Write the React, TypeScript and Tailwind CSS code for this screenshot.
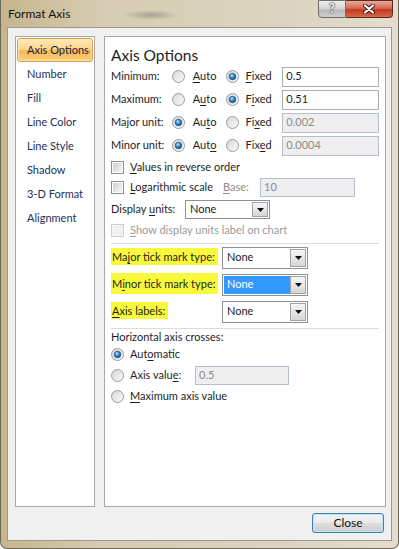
import type { ReactNode } from 'react';

const NAV = ['Axis Options', 'Number', 'Fill', 'Line Color', 'Line Style', 'Shadow', '3-D Format', 'Alignment'];

const UNIT_ROWS = [
  { label: 'Minimum:', auto: false, value: '0.5', key: 0 },
  { label: 'Maximum:', auto: false, value: '0.51', key: 1 },
  { label: 'Major unit:', auto: true, value: '0.002', key: 2 },
  { label: 'Minor unit:', auto: true, value: '0.0004', key: 3 },
];

// Underlines the accelerator letter, Windows style.
function Acc({ text, at }: { text: string; at: number }) {
  return (
    <span>
      {text.slice(0, at)}
      <span className="underline decoration-1 underline-offset-[2px]">{text[at]}</span>
      {text.slice(at + 1)}
    </span>
  );
}

function Radio({ checked }: { checked?: boolean }) {
  return (
    <svg width="13" height="13" viewBox="0 0 13 13" className="shrink-0">
      <circle cx="6.5" cy="6.5" r="6" fill="url(#rb-bg)" stroke="#9a9a9a" strokeWidth="1" />
      {checked && <circle cx="6.5" cy="6.5" r="3.3" fill="url(#rb-dot)" stroke="#1d4f80" strokeWidth="0.7" />}
    </svg>
  );
}

function Check({ disabled }: { disabled?: boolean }) {
  return (
    <span
      className={`flex h-[13px] w-[13px] shrink-0 items-center justify-center border ${
        disabled ? 'border-[#cfcfcf] bg-[#f7f7f7]' : 'border-[#8e8f8f] bg-white'
      }`}
    >
      <span
        className={`h-[9px] w-[9px] ${
          disabled ? 'bg-[#f1f1f1]' : 'bg-[linear-gradient(135deg,#cfcfcf,#f6f6f6)]'
        }`}
      />
    </span>
  );
}

function TextBox({ value, disabled, className = '' }: { value: string; disabled?: boolean; className?: string }) {
  return (
    <div
      className={`flex items-center border px-[3px] ${
        disabled ? 'border-[#b3bfcb] bg-[#efefef] text-[#8b8b8b]' : 'border-[#abadb3] bg-white text-[#1e1e1e]'
      } ${className}`}
    >
      {value}
    </div>
  );
}

function Select({ value, active, className = '' }: { value: string; active?: boolean; className?: string }) {
  return (
    <div className={`flex items-stretch border border-[#8d9096] bg-white p-px ${className}`}>
      <div className={`flex flex-1 items-center pl-[3px] ${active ? 'bg-[#3399ff] text-white' : ''}`}>{value}</div>
      <div className="flex w-[16px] items-center justify-center border border-[#a3a3a3] bg-[linear-gradient(#f7f7f7,#e6e6e6_50%,#d6d6d6)]">
        <svg width="7" height="4" viewBox="0 0 7 4">
          <path d="M0 0h7L3.5 4z" fill="#111" />
        </svg>
      </div>
    </div>
  );
}

function Row({ h, children }: { h: string; children: ReactNode }) {
  return <div className={`flex items-center ${h}`}>{children}</div>;
}

export default function App() {
  return (
    <div className="flex h-[549px] w-[399px] flex-col overflow-hidden whitespace-nowrap rounded-b-[7px] border-x border-b border-[#6b675c] bg-[linear-gradient(90deg,#c6b58c,#d6ccb2_25%,#dcd4c1_70%,#e4ddcd)] font-['Lato','Liberation_Sans',sans-serif] text-[11px] text-[#1e1e1e]">
      <svg width="0" height="0" className="absolute">
        <defs>
          <linearGradient id="rb-bg" x1="0" y1="0" x2="1" y2="1">
            <stop offset="0" stopColor="#d6d6d6" />
            <stop offset="1" stopColor="#fbfbfb" />
          </linearGradient>
          <radialGradient id="rb-dot" cx="0.4" cy="0.35" r="0.7">
            <stop offset="0" stopColor="#b8e8ff" />
            <stop offset="0.45" stopColor="#3f8fcf" />
            <stop offset="1" stopColor="#123f70" />
          </radialGradient>
        </defs>
      </svg>

      {/* title bar */}
      <div className="flex h-[27px] shrink-0 items-start justify-between bg-[radial-gradient(ellipse_28px_5px_at_150px_15px,rgba(80,80,70,0.35),transparent)]">
        <div className="flex h-[27px] items-center pl-[7px] text-[12px] text-[#111]">Format Axis</div>
        <div className="mr-[5px] flex">
          <div className="flex h-[18px] w-[28px] items-center justify-center rounded-bl-[4px] border border-[#6e6e6e] bg-[linear-gradient(#f0f0f0,#d4d4d4_50%,#b8b8b8_55%,#cfcfcf)] text-[13px] font-bold text-[#f4f4f4] [text-shadow:0_0_2px_#333,0_0_1px_#222]">
            ?
          </div>
          <div className="flex h-[18px] w-[47px] items-center justify-center rounded-br-[4px] border border-l-0 border-[#5b2a1f] bg-[linear-gradient(#e8a99a,#d46a53_45%,#c23a20_55%,#d9694d)]">
            <svg width="12" height="10" viewBox="0 0 12 10">
              <path d="M2 1.5l8 7M10 1.5l-8 7" stroke="#3a1a12" strokeWidth="4" strokeLinecap="round" />
              <path d="M2 1.5l8 7M10 1.5l-8 7" stroke="#fff" strokeWidth="2.2" strokeLinecap="round" />
            </svg>
          </div>
        </div>
      </div>

      {/* client area */}
      <div className="mx-[6px] flex h-[514px] shrink-0 flex-col border border-[#9c9788] bg-[#f0f0f0] pl-[7px] pt-[8px]">
        <div className="flex h-[471px] gap-[9px]">
          <div className="w-[80px] border border-[#a8a8a8] bg-white p-px">
            {NAV.map((item, i) =>
              i === 0 ? (
                <div
                  key={item}
                  className="flex h-[24px] w-[76px] items-center rounded-[3px] border border-[#dfa04a] bg-[linear-gradient(#fee9b9,#fcd68e_45%,#f8b652_55%,#fbd382)] pl-[9px] text-[#1b2240] shadow-[inset_0_0_0_1px_rgba(255,240,200,0.6)]"
                >
                  {item}
                </div>
              ) : (
                <div key={item} className="flex h-[24px] items-center pl-[10px] text-[#22305a]">
                  {item}
                </div>
              ),
            )}
          </div>

          <div className="flex w-[282px] flex-col border border-[#a8a8a8] bg-white pl-[6px] pr-[6px]">
            <div className="mt-[8px] h-[20px] text-[15.5px] leading-[20px]">Axis Options</div>

            {UNIT_ROWS.map((r) => (
              <Row key={r.label} h="h-[23px]">
                <span className="w-[61px]">{r.label}</span>
                <span className="flex w-[54px] items-center gap-[8px]">
                  <Radio checked={r.auto} />
                  <Acc text="Auto" at={r.key} />
                </span>
                <span className="flex w-[57px] items-center gap-[7px]">
                  <Radio checked={!r.auto} />
                  <Acc text="Fixed" at={r.key} />
                </span>
                <TextBox value={r.value} disabled={r.auto} className="h-[20px] w-[97px]" />
              </Row>
            ))}

            <Row h="h-[20px]">
              <Check />
              <span className="ml-[6px]">
                <Acc text="Values in reverse order" at={0} />
              </span>
            </Row>
            <Row h="h-[21px]">
              <span className="flex w-[112px] items-center gap-[6px]">
                <Check />
                <Acc text="Logarithmic scale" at={0} />
              </span>
              <span className="w-[37px] text-[#8d8d8d]">
                <Acc text="Base:" at={0} />
              </span>
              <TextBox value="10" disabled className="h-[19px] w-[95px]" />
            </Row>
            <Row h="h-[23px]">
              <span className="w-[74px]">
                <Acc text="Display units:" at={8} />
              </span>
              <Select value="None" className="h-[19px] w-[85px]" />
            </Row>
            <Row h="h-[19px]">
              <Check disabled />
              <span className="ml-[6px] text-[#9a9a9a]">
                <Acc text="Show display units label on chart" at={0} />
              </span>
            </Row>

            <div className="mt-[3px] h-px bg-[#dcdcdc]" />

            <Row h="h-[27px]">
              <span className="w-[111px]">
                <span className="bg-[#f9f93c] py-[2px] pl-px pr-[3px]">
                  <Acc text="Major tick mark type:" at={2} />
                </span>
              </span>
              <Select value="None" className="h-[22px] w-[86px]" />
            </Row>
            <Row h="h-[27px]">
              <span className="w-[111px]">
                <span className="bg-[#f9f93c] py-[4px] pl-px pr-[3px]">
                  <Acc text="Minor tick mark type:" at={1} />
                </span>
              </span>
              <Select value="None" active className="h-[22px] w-[86px]" />
            </Row>
            <Row h="h-[27px]">
              <span className="w-[111px]">
                <span className="bg-[#f9f93c] py-[2px] pl-px pr-[3px]">
                  <Acc text="Axis labels:" at={0} />
                </span>
              </span>
              <Select value="None" className="h-[22px] w-[86px]" />
            </Row>

            <div className="mt-[3px] h-px bg-[#dcdcdc]" />

            <Row h="h-[17px]">Horizontal axis crosses:</Row>
            <Row h="h-[17px]">
              <Radio checked />
              <span className="ml-[6px]">
                <Acc text="Automatic" at={3} />
              </span>
            </Row>
            <Row h="h-[24px]">
              <Radio />
              <span className="ml-[6px] w-[65px]">
                <Acc text="Axis value:" at={9} />
              </span>
              <TextBox value="0.5" disabled className="h-[19px] w-[94px]" />
            </Row>
            <Row h="h-[18px]">
              <Radio />
              <span className="ml-[6px]">
                <Acc text="Maximum axis value" at={0} />
              </span>
            </Row>
          </div>
        </div>

        <div className="mt-[6px] flex justify-end pr-[7px]">
          <button
            type="button"
            className="flex h-[20px] w-[72px] items-center justify-center rounded-[3px] border border-[#3c7fb1] bg-[linear-gradient(#f2f2f2,#ebebeb_50%,#dddddd_50%,#cfcfcf)] text-[12px] text-[#111] shadow-[inset_0_0_0_1px_#bfe6fb]"
          >
            Close
          </button>
        </div>
      </div>
    </div>
  );
}
